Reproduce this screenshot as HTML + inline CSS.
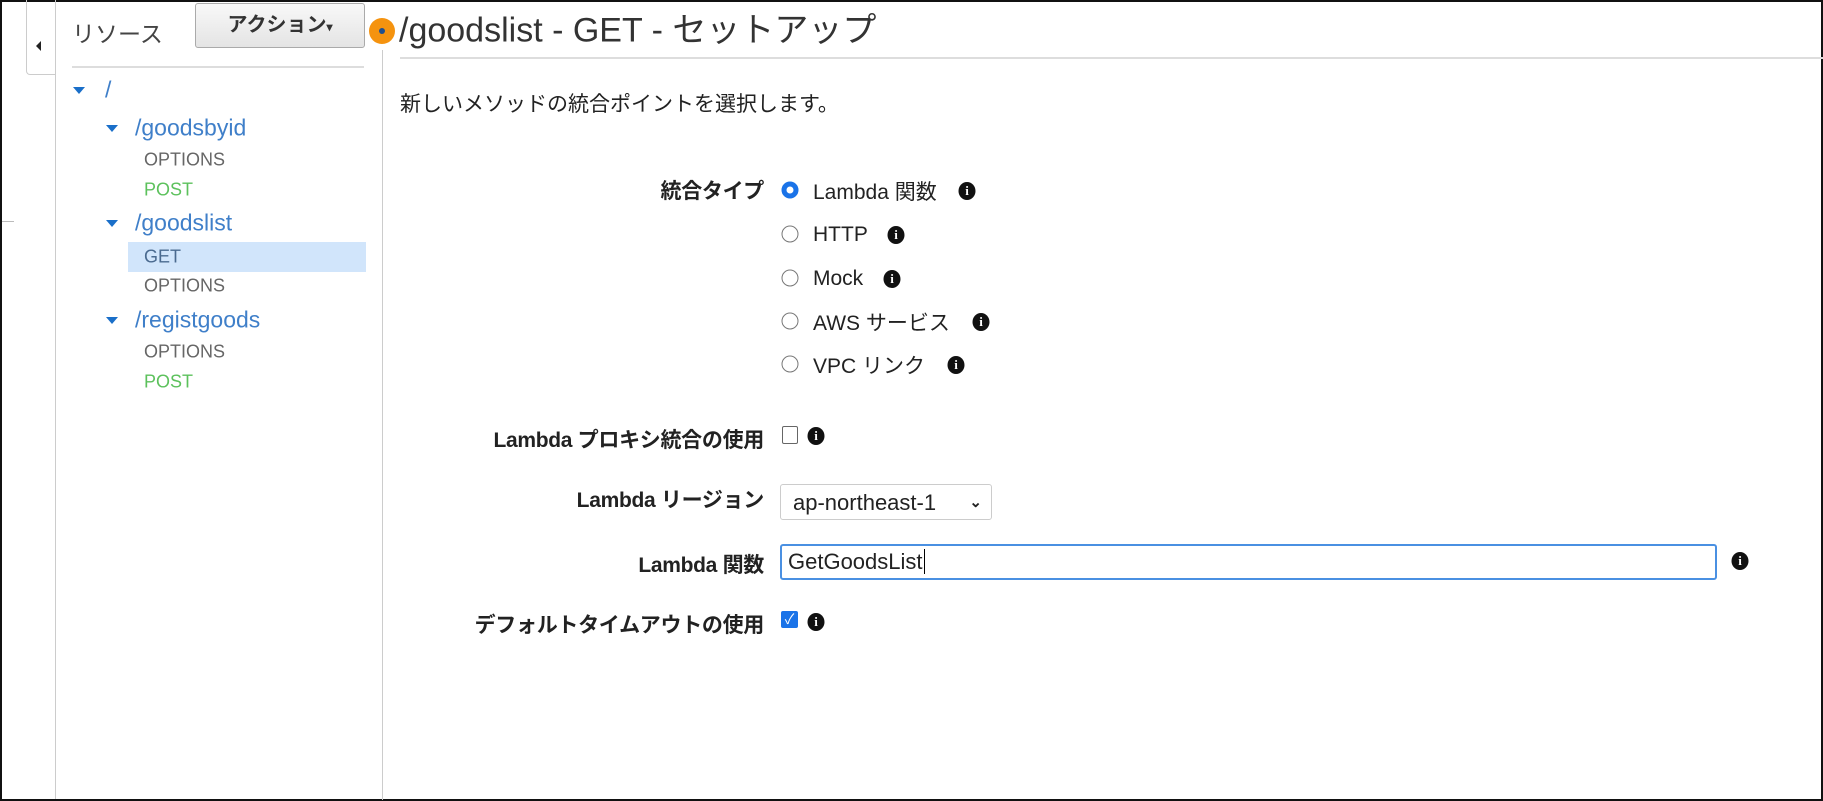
<!DOCTYPE html>
<html><head><meta charset="utf-8"><style>
body{margin:0;width:1823px;height:801px;overflow:hidden;background:#fff;font-family:"Liberation Sans","Noto Sans CJK JP",sans-serif;position:relative}
.a{position:absolute;white-space:nowrap}
.frame{position:absolute;left:0;top:0;width:1819px;height:797px;border:2px solid #111}
.t{position:absolute;transform:translateY(-50%);white-space:nowrap}
.blue{color:#3f7fc9}
.gray{color:#666;font-size:18px}
.green{color:#5cc15c;font-size:18px}
.tri{position:absolute;width:0;height:0;border-left:6px solid transparent;border-right:6px solid transparent;border-top:7px solid #1a6fc9}
.lbl{position:absolute;right:1059px;transform:translateY(-50%);font-weight:bold;font-size:21px;color:#222;white-space:nowrap;letter-spacing:-0.3px}
.radio{position:absolute;width:15px;height:15px;border:1px solid #777;border-radius:50%;transform:translate(-50%,-50%);background:#fff}
.info{position:absolute;width:17px;height:18px;border-radius:50%;background:#111;color:#fff;font:bold 13px "Liberation Serif",serif;text-align:center;line-height:18px;transform:translate(-50%,-50%)}
.rt{position:absolute;left:813px;transform:translateY(-50%);font-size:21px;color:#222;white-space:nowrap}
</style></head><body>
<div class="frame"></div>
<div class="a" style="left:26px;top:0;width:28px;height:74px;border:1px solid #ccc;border-top:none;border-radius:0 0 0 4px"></div>
<div class="a" style="left:36px;top:41px;width:0;height:0;border-top:5px solid transparent;border-bottom:5px solid transparent;border-right:5px solid #222"></div>
<div class="a" style="left:55px;top:74px;width:1px;height:725px;background:#ccc"></div>
<div class="a" style="left:2px;top:221px;width:12px;height:1px;background:#bbb"></div>
<div class="t" style="left:72px;top:32px;font-size:23px;color:#444">リソース</div>
<div class="a" style="left:195px;top:3px;width:168px;height:43px;border:1px solid #aaa;border-radius:3px;background:linear-gradient(#f8f8f8,#e4e4e4);font-size:20px;font-weight:bold;color:#333;text-align:center;line-height:43px">アクション<span style="font-size:12px">▾</span></div>
<div class="a" style="left:72px;top:66px;width:292px;height:2px;background:#ddd"></div>
<div class="a" style="left:382px;top:50px;width:1px;height:750px;background:#ccc"></div>
<div class="tri" style="left:73px;top:87px"></div><div class="t blue" style="left:105px;top:90px;font-size:23px">/</div>
<div class="tri" style="left:106px;top:125px"></div><div class="t blue" style="left:135px;top:128px;font-size:23px">/goodsbyid</div>
<div class="t gray" style="left:144px;top:160px">OPTIONS</div>
<div class="t green" style="left:144px;top:190px">POST</div>
<div class="tri" style="left:106px;top:220px"></div><div class="t blue" style="left:135px;top:223px;font-size:23px">/goodslist</div>
<div class="a" style="left:128px;top:242px;width:238px;height:30px;background:#d1e5fb"></div>
<div class="t" style="left:144px;top:257px;font-size:18px;color:#4a6a8f">GET</div>
<div class="t gray" style="left:144px;top:286px">OPTIONS</div>
<div class="tri" style="left:106px;top:317px"></div><div class="t blue" style="left:135px;top:320px;font-size:23px">/registgoods</div>
<div class="t gray" style="left:144px;top:352px">OPTIONS</div>
<div class="t green" style="left:144px;top:382px">POST</div>
<div class="a" style="left:369px;top:18px;width:26px;height:26px;border-radius:50%;background:#f5930f"></div>
<div class="a" style="left:379px;top:28px;width:6px;height:6px;border-radius:50%;background:#1f4f8f"></div>
<div class="t" style="left:399px;top:27px;font-size:34px;color:#333">/goodslist - GET - セットアップ</div>
<div class="a" style="left:400px;top:57px;width:1423px;height:2px;background:#ddd"></div>
<div class="t" style="left:400px;top:103px;font-size:21px;color:#222">新しいメソッドの統合ポイントを選択します。</div>
<div class="lbl" style="top:190px">統合タイプ</div>
<div class="radio" style="left:790px;top:190px;border:5px solid #1a73e8;width:7px;height:7px"></div>
<div class="rt" style="top:191px">Lambda 関数</div><div class="info" style="left:967px;top:191px">i</div>
<div class="radio" style="left:790px;top:234px"></div><div class="rt" style="top:235px">HTTP</div><div class="info" style="left:896px;top:235px">i</div>
<div class="radio" style="left:790px;top:278px"></div><div class="rt" style="top:279px">Mock</div><div class="info" style="left:892px;top:279px">i</div>
<div class="radio" style="left:790px;top:321px"></div><div class="rt" style="top:322px">AWS サービス</div><div class="info" style="left:981px;top:322px">i</div>
<div class="radio" style="left:790px;top:364px"></div><div class="rt" style="top:365px">VPC リンク</div><div class="info" style="left:956px;top:365px">i</div>
<div class="lbl" style="top:439px">Lambda プロキシ統合の使用</div>
<div class="a" style="left:782px;top:426px;width:14px;height:16px;border:1px solid #666;border-radius:2px"></div>
<div class="info" style="left:816px;top:436px">i</div>
<div class="lbl" style="top:499px">Lambda リージョン</div>
<div class="a" style="left:780px;top:484px;width:212px;height:36px;border:1px solid #ccc;border-radius:3px;font-size:22px;line-height:36px;color:#222;padding-left:12px;box-sizing:border-box">ap-northeast-1<span style="position:absolute;right:9px;font-size:15px;font-weight:bold">⌄</span></div>
<div class="lbl" style="top:564px">Lambda 関数</div>
<div class="a" style="left:780px;top:544px;width:937px;height:36px;border:2px solid #4a90e2;border-radius:3px;box-sizing:border-box;font-size:22px;line-height:32px;padding-left:6px;color:#222">GetGoodsList<span style="border-left:1px solid #000;margin-left:1px"></span></div>
<div class="info" style="left:1740px;top:561px">i</div>
<div class="lbl" style="top:624px">デフォルトタイムアウトの使用</div>
<div class="a" style="left:781px;top:611px;width:17px;height:17px;background:#1a73e8;border-radius:2px;color:#fff;font-size:14px;line-height:17px;text-align:center">✓</div>
<div class="info" style="left:816px;top:622px">i</div>
</body></html>
